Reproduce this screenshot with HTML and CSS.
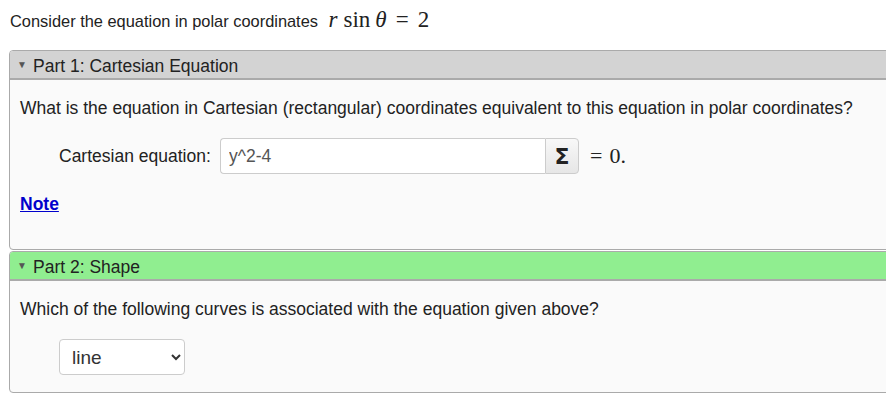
FILE: index.html
```html
<!DOCTYPE html>
<html lang="en">
<head>
    <meta charset="UTF-8">
    <title>Polar to Cartesian</title>
    <link rel="stylesheet" href="styles.css">
</head>
<body>
    <div class="intro">
        Consider the equation in polar coordinates
        <span class="math"><i>r</i><span class="op">sin</span><i>θ</i><span class="rel">=</span>2</span>
    </div>

    <div class="part">
        <div class="part-head">
            <span class="caret">▼</span>Part 1: Cartesian Equation
        </div>
        <div class="part-body">
            <p>What is the equation in Cartesian (rectangular) coordinates equivalent to this equation in polar coordinates?</p>
            <div class="answer-row">
                <label for="cart-input">Cartesian equation:</label>
                <div class="input-group">
                    <input type="text" id="cart-input" value="y^2-4">
                    <button class="btn-sigma">Σ</button>
                </div>
                <span class="math eq-zero"><span class="rel">=</span>0.</span>
            </div>
            <a href="#" class="note-link">Note</a>
        </div>
    </div>

    <div class="part part-correct">
        <div class="part-head">
            <span class="caret">▼</span>Part 2: Shape
        </div>
        <div class="part-body">
            <p>Which of the following curves is associated with the equation given above?</p>
            <div class="answer-row">
                <select class="shape-select">
                    <option>line</option>
                    <option>circle</option>
                    <option>parabola</option>
                </select>
            </div>
        </div>
    </div>
</body>
</html>
```

FILE: styles.css
```css
body{
    margin: 0px;
    font-family: "Liberation Sans", Arial, sans-serif;
    font-size: 16.4px;
    color: #222;
    background-color: #fff;
    overflow: hidden;
}
.intro{
    padding: 10px 10px 0px 10px;
    height: 40px;
    line-height: 20px;
}
.math{
    font-family: "Liberation Serif", "Times New Roman", serif;
    font-size: 23px;
    margin-left: 6px;
}
.math .op{
    margin: 0px 5px 0px 6px;
}
.math .rel{
    margin: 0px 9px;
}
.part{
    margin-left: 9px;
    width: 900px;
    border: 1px solid #aaa;
    border-radius: 4px;
    background-color: #fafafa;
    margin-bottom: 1px;
    font-size: 17.5px;
}
.part-head{
    height: 27px;
    line-height: 30px;
    background-color: #d3d3d3;
    border-bottom: 2px solid #aaa;
    border-radius: 3px 3px 0px 0px;
    padding-left: 7px;
}
.part-correct .part-head{
    background-color: #90ee90;
}
.caret{
    display: inline-block;
    font-size: 10px;
    color: #555;
    width: 16px;
    vertical-align: top;
    position: relative;
    top: -1px;
}
.part-body{
    padding: 18px 10px 35px 10px;
}
.part-correct .part-body{
    padding-bottom: 17px;
}
.part-body p{
    margin: 0px 0px 20px 0px;
    line-height: 20px;
}
.answer-row{
    display: flex;
    align-items: center;
    margin-left: 39px;
}
.answer-row label{
    width: 161px;
}
.input-group{
    display: flex;
    height: 36px;
}
#cart-input{
    width: 325px;
    box-sizing: border-box;
    height: 36px;
    border: 1px solid #ccc;
    border-right: none;
    border-radius: 4px 0px 0px 4px;
    padding: 0px 8px;
    font-family: "Liberation Sans", Arial, sans-serif;
    font-size: 17.5px;
    color: #555;
    background-color: #fff;
    outline: none;
}
.btn-sigma{
    width: 34px;
    height: 36px;
    border: 1px solid #ccc;
    border-radius: 0px 4px 4px 0px;
    background: linear-gradient(#f8f8f8, #e6e6e6);
    font-family: "DejaVu Sans", sans-serif;
    font-weight: 700;
    font-size: 22px;
    color: #222;
    padding: 0px;
    cursor: pointer;
}
.eq-zero{
    margin-left: 3px;
    font-size: 22px;
}
.eq-zero .rel{
    margin-left: 8px;
    margin-right: 7px;
}
.note-link{
    display: block;
    margin-top: 20px;
    line-height: 20px;
    font-weight: 700;
    color: #0000cc;
    text-decoration: underline;
}
.shape-select{
    width: 126px;
    height: 36px;
    border: 1px solid #ccc;
    border-radius: 4px;
    background-color: #fff;
    font-family: "Liberation Sans", Arial, sans-serif;
    font-size: 19px;
    color: #333;
    padding: 0px 8px;
}
```
